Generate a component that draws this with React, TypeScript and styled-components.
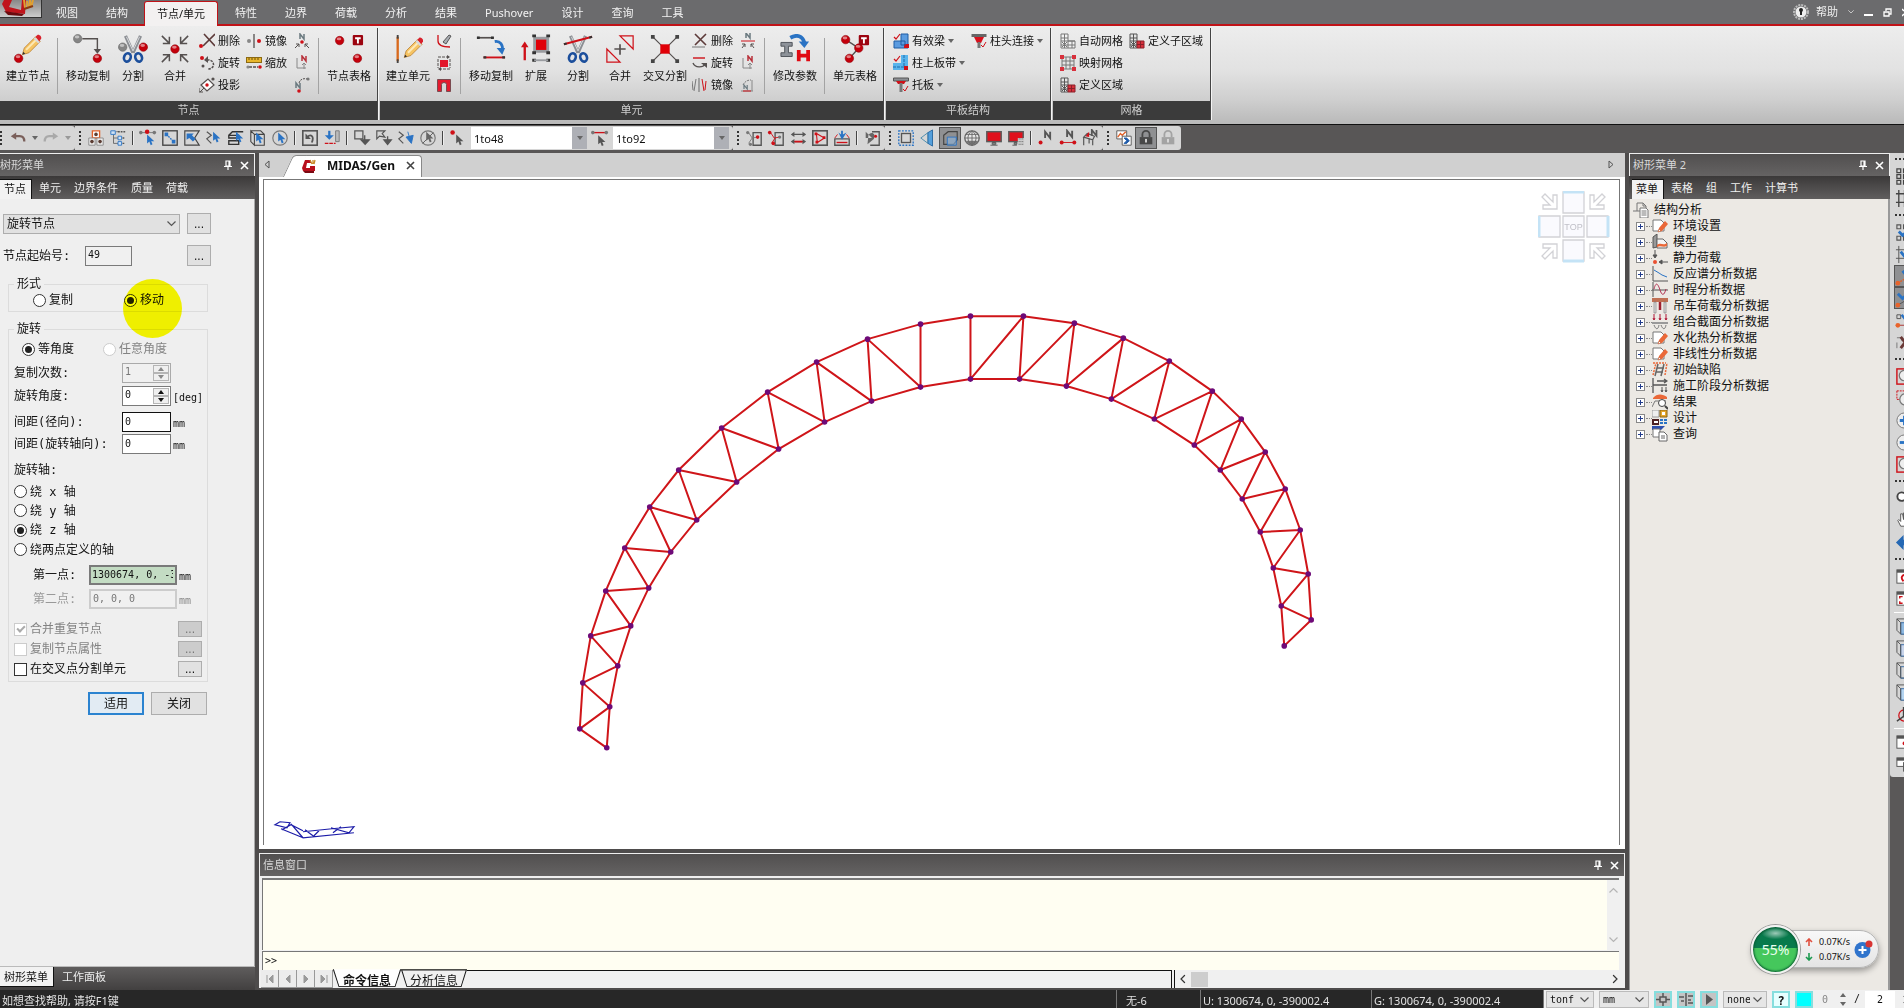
import React from "react";
import styled, { createGlobalStyle, css } from "styled-components";

const UI = `"Noto Sans", "Noto Sans CJK SC", sans-serif`;
const FORM = `"DejaVu Sans Mono", "Noto Sans CJK SC", monospace`;
const RED = "#cf1018";
const BLUE = "#2a73c4";
const INK = "#55504f";

const Global = createGlobalStyle`
  *, *::before, *::after { box-sizing: border-box; }
  body { margin: 0; overflow: hidden; font-family: ${UI}; font-size: 11px; color: #111; background: #5a5959; }
  button, input, select, textarea { font: inherit; color: inherit; margin: 0; padding: 0; border: 0; border-radius: 0; background: none; outline: 0; }
  button { cursor: default; white-space: nowrap; }
  svg { display: block; flex: none; }
`;

/* ---------- drawing helpers ---------- */

type BallProps = { x: number; y: number; r?: number; gray?: boolean };
const Ball = ({ x, y, r = 4, gray }: BallProps) => (
  <g>
    <circle cx={x} cy={y} r={r} fill={gray ? "#858585" : "#c4000c"} stroke={gray ? "#666" : "#8e0008"} strokeWidth="0.6" />
    <ellipse cx={x - r * 0.15} cy={y - r * 0.4} rx={r * 0.55} ry={r * 0.35} fill="#fff" opacity="0.5" />
  </g>
);

const Pencil = () => (
  <g>
    <path d="M10 22l2-7L24 3l5 5-12 12z" fill="#f6c463" stroke="#b5792a" strokeWidth="0.8" />
    <path d="M14 17L26 5" stroke="#fde9b8" strokeWidth="2" />
    <path d="M24 3l2-2c2-1 5 2 4 4l-2 3z" fill="#d8202c" />
    <path d="M22 5l5 5 1.500-1.500-5-5z" fill="#d5d8de" />
    <path d="M10 22l1-3 2 2z" fill="#333" />
  </g>
);

const Scissors = () => (
  <g>
    <path d="M8 2l8 18M24 2l-8 18" stroke="#8c8f94" strokeWidth="3.500" fill="none" />
    <path d="M9 3l7 15M23 3l-7 15" stroke="#dcdee0" strokeWidth="1" fill="none" />
    <ellipse cx="10" cy="25" rx="3.500" ry="4.500" fill="none" stroke="#1c4f9c" strokeWidth="2.800" transform="rotate(20 10 25)" />
    <ellipse cx="22" cy="25" rx="3.500" ry="4.500" fill="none" stroke="#1c4f9c" strokeWidth="2.800" transform="rotate(-20 22 25)" />
  </g>
);

const TBadge = ({ x, y }: { x: number; y: number }) => (
  <g>
    <rect x={x} y={y} width="11" height="11" rx="1" fill="#9c0410" />
    <path d={`M${x + 2.5} ${y + 3.500}h6M${x + 5.5} ${y + 3}v6`} stroke="#fff" strokeWidth="2" />
  </g>
);

const Cursor = ({ x, y, c = BLUE }: { x: number; y: number; c?: string }) => (
  <path transform={`translate(${x} ${y})`} d="M0 0v10l2.500-2 1.500 4 2-1-1.500-3.500H8z" fill={c} />
);

const N = ({ x, y, c = "#6b7a80", s = 1 }: { x: number; y: number; c?: string; s?: number }) => (
  <path transform={`translate(${x} ${y}) scale(${s})`} d="M0 5V0l4 5V0" fill="none" stroke={c} strokeWidth="1.500" />
);

const bigIcons: Record<string, React.ReactNode> = {
  node: <><Pencil /><Ball x={6} y={26} r={4.5} /></>,
  move: <><Ball x={5} y={5} r={4.5} gray /><path d="M10 5h16v13" fill="none" stroke={INK} strokeWidth="1.500" /><path d="M22 16h8l-4 5z" fill={INK} /><Ball x={26} y={26} r={4.5} /></>,
  cut: <><Scissors /><Ball x={5} y={14} r={4.500} gray /><Ball x={27} y={14} r={4.500} /></>,
  merge: <><g fill="none" stroke={INK} strokeWidth="1.600"><path d="M2 2l8 8M3 10h7V3M30 2l-8 8M29 10h-7V3M2 30l8-8M3 22h7v7M30 30l-8-8M29 22h-7v7" /></g><Ball x={16} y={16} r={4.500} /></>,
  nodeTable: <><Ball x={6} y={7} r={4.500} /><TBadge x={20} y={1} /><Ball x={25} y={26} r={4.500} /></>,
  elem: <><path d="M5 3v26" stroke="#d8691c" strokeWidth="2.500" /><path d="M5 1v4M5 27v4" stroke="#444" strokeWidth="2" /><g transform="translate(2 3)"><Pencil /></g></>,
  moveElem: <><path d="M1 4h18" stroke={INK} strokeWidth="1.800" /><path d="M20 8c6-1 9 4 8 9" fill="none" stroke={BLUE} strokeWidth="3" /><path d="M22 15h9l-3 7z" fill={BLUE} /><path d="M8 25h23" stroke={RED} strokeWidth="2" /><path d="M8 25h3M28 25h3M1 4h3M16 4h3" stroke="#333" strokeWidth="2.500" /></>,
  extend: <><path d="M4 28V12" stroke={RED} strokeWidth="2.500" /><path d="M0 14l4-6 4 6z" fill={RED} /><rect x="13" y="3" width="17" height="17" fill="#9a9ca0" /><rect x="16" y="6" width="11" height="11" fill="#e00008" /><path d="M12 2h4M27 2h4M12 20h4M27 20h4M12 28h4M27 28h4" stroke="#333" strokeWidth="3" /><path d="M14 28h15" stroke="#9a9ca0" strokeWidth="2" /></>,
  cutElem: <><Scissors /><path d="M1 11L31 3" stroke={RED} strokeWidth="2.200" /><path d="M1 11l3-1M28 4l3-1" stroke="#333" strokeWidth="2.200" /></>,
  mergeElem: <><path d="M16 2h14v14zM2 16v14h14z" fill="none" stroke={RED} strokeWidth="1.300" /><path d="M16 11v11M10 16h12" stroke={INK} strokeWidth="1.800" /></>,
  cross: <><path d="M3 3l26 26M29 3L3 29" stroke={INK} strokeWidth="1.300" /><path d="M1 1h4v4H1zM27 1h4v4h-4zM1 27h4v4H1zM27 27h4v4h-4z" fill="#444" /><rect x="11" y="11" width="10" height="10" fill="#e00008" /></>,
  param: <><path d="M1 9h12v4H9v7h4v4H1v-4h4v-7H1z" fill="#8d9299" stroke="#4d5157" /><path d="M18 17h4v4h6v-4h4v12h-4v-4h-6v4h-4z" fill="#e00a12" /><path d="M11 4c7-4 13-2 15 5" fill="none" stroke={BLUE} strokeWidth="4" /><path d="M20 8h11l-5 7z" fill={BLUE} /></>,
  elemTable: <><path d="M6 6l14 9-10 11" fill="none" stroke={INK} strokeWidth="1.500" /><Ball x={6} y={6} r={4.500} /><Ball x={20} y={15} r={4.500} /><Ball x={10} y={26} r={4.500} /><TBadge x={20} y={1} /></>,
};

const smallIcons: Record<string, React.ReactNode> = {
  del: <><path d="M5 1l11 12M16 1L4 13" stroke="#5d3b3a" strokeWidth="1.600" /><circle cx="2" cy="13" r="2" fill={RED} /></>,
  delE: <><path d="M3 1l11 11M14 1L3 12" stroke="#5d3b3a" strokeWidth="1.600" /><path d="M0 14h13" stroke="#888" strokeWidth="1.200" /></>,
  rot: <><circle cx="3" cy="3" r="2" fill={RED} /><circle cx="4" cy="11" r="1.500" fill={INK} /><path d="M8 5c8-1 9 9 1 9M6 3" fill="none" stroke={INK} strokeWidth="1.500" strokeDasharray="2.500 1" /><path d="M9 1v7l-4-3z" fill={INK} /></>,
  rotE: <><path d="M1 3h12" stroke={RED} strokeWidth="1.400" /><path d="M1 8c2 5 10 5 12 1" fill="none" stroke={INK} strokeWidth="1.400" /><path d="M9 8h6v5z" fill={INK} /></>,
  proj: <><path d="M2 8l7-6 6 6-7 6z" fill="#fff" stroke={INK} strokeWidth="1.200" /><circle cx="8" cy="8" r="1.700" fill={RED} /><circle cx="14" cy="2" r="1.600" fill={INK} /><path d="M5 11l-4 4M0 11v4h4" fill="none" stroke={INK} /></>,
  mirror: <><path d="M8 1v14" stroke={INK} strokeWidth="1.300" /><circle cx="3" cy="8" r="2" fill="#888" /><circle cx="13" cy="8" r="2" fill={RED} /></>,
  mirrorE: <><path d="M4 2L2 14M0 4l1 9" stroke="#777" fill="none" /><path d="M7 1v14" stroke="#888" strokeWidth="1.400" /><path d="M10 2l2 12M14 4l-1 9" stroke={RED} fill="none" /></>,
  scale: <><rect x="0.500" y="2.500" width="15" height="5" fill="#e8b62c" stroke="#8b6a14" /><path d="M3 3v2M6 3v2M9 3v2M12 3v2" stroke="#6b4f0c" /><path d="M3 12h9" stroke={INK} strokeWidth="1.300" strokeDasharray="3 1" /><circle cx="2" cy="12" r="1.600" fill="#888" /><circle cx="14" cy="12" r="1.800" fill={RED} /></>,
  nMerge: <><N x={6} y={1} /><circle cx="8" cy="9" r="1.800" fill={RED} /><path d="M1 15l4-4M2 11h3v3M15 15l-4-4M14 11h-3v3" fill="none" stroke={INK} /></>,
  nMergeE: <><N x={6} y={0} /><path d="M1 8h14" stroke={RED} /><path d="M2 15l3-4M2 11h3v3M14 15l-3-4M14 11h-3v3" fill="none" stroke={INK} /></>,
  nAxis: <><path d="M3 3v10h9" fill="none" stroke="#888" /><path d="M10 14V8M8 10l2-2 2 2" fill="none" stroke="#888" /><N x={8} y={1} c="#b8303a" /></>,
  nRot: <><path d="M5 6c1-4 5-5 8-4" fill="none" stroke={INK} strokeDasharray="2 1" /><circle cx="14" cy="2" r="1.600" fill="#777" /><N x={2} y={6} /><circle cx="5" cy="14" r="1.800" fill={RED} /></>,
  nRotE: <><path d="M12 3v11M1 14h12" stroke="#888" fill="none" /><path d="M3 8c2-4 5-5 8-5" fill="none" stroke="#777" strokeDasharray="2 1" /><N x={4} y={8} s={0.8} /><path d="M3 14h8" stroke={RED} /></>,
  curve: <><path d="M2 2v6c0 4 3 6 12 6" fill="none" stroke={RED} strokeWidth="1.300" /><path d="M7 9l6-7 2 1-5 8z" fill="#a9adb3" stroke="#555" /></>,
  swap: <><rect x="4" y="5" width="8" height="7" fill="#e2182b" /><path d="M2 2h11M14 14H4M2 4v9M14 4v9" fill="none" stroke={INK} strokeDasharray="3 1" /><path d="M11 0l3 2-3 2zM5 12l-3 2 3 2z" fill={INK} /></>,
  arch: <path d="M1.500 14.500v-12h13v12h-4v-7a2.500 2 0 0 0-5 0v7z" fill="#e51a2e" stroke="#7b4a50" />,
  beam: <><path d="M8 1h7v14H1V8h7z" fill="#5a9be0" stroke="#1f5da3" /><path d="M11 11h5v4h-5z" fill={RED} /><path d="M8 8h4v4H8z" fill="none" stroke="#1f5da3" /><path d="M1 4l2 2 4-5" fill="none" stroke={RED} strokeWidth="1.200" /></>,
  strip: <><path d="M8 0h7v15H0V8h8z" fill="#58b4ec" /><path d="M11 0v12M0 12h12" fill="none" stroke="#1d6cae" strokeDasharray="3 1" /><path d="M11 11h4v4h-4z" fill={RED} /><path d="M1 4l2 2 4-5" fill="none" stroke={RED} strokeWidth="1.200" /></>,
  plate: <><path d="M0.500 1h15v3h-15z" fill="#8c8f94" stroke="#555" /><path d="M3 4h10l-2 3H5z" fill={RED} /><path d="M6.500 6h3v9h-3z" fill="#777" /><path d="M10 12l2 2 3-5" fill="none" stroke={RED} /></>,
  head: <><path d="M0.500 1h15v3h-15z" fill="#666" /><path d="M3 4h10l-3 6H6z" fill="#d8101c" /><path d="M6.500 9h3v6h-3z" fill="#777" /><path d="M10 12l2 2 3-5" fill="none" stroke={RED} /></>,
  mesh: <path d="M1 1h7v7h7v7H1zM1 5h7M1 8h14M1 12h14M4.500 1v14M8 8v7M12 8v7M2 9l5 5M7 9l-5 5" fill="#f2f2f2" stroke="#777" />,
  mapMesh: <><path d="M2 2h12v12H2zM6 2v12M10 2v12M2 6h12M2 10h12" fill="none" stroke="#777" /><path d="M0 0h4v4H0zM12 0h4v4h-4zM0 12h4v4H0zM12 12h4v4h-4z" fill="#d8303c" /></>,
  region: <><path d="M1 1h7v14H1zM1 5h7M1 8h7M1 12h7M4.500 1v14M2 9l5 5M7 9l-5 5" fill="#e4e4e4" stroke="#555" /><path d="M8 8h7v7H8z" fill="#d8303c" stroke="#8b2029" /><path d="M11.500 8v7M8 11.500h7" stroke="#8b2029" /></>,
};

const Lock = ({ c }: { c: string }) => (
  <><path d="M6 9V6a4 4 0 0 1 8 0v3" fill="none" stroke={c} strokeWidth="2" /><rect x="3" y="9" width="14" height="8" fill={c} /><rect x="9" y="11" width="2" height="4" fill="#ddd" /></>
);
const Cube = ({ fill = "none" }: { fill?: string }) => (
  <g fill="none" stroke="#555"><path d="M2 2h12l4 4v12H6l-4-4z" /><path d="M6 6h12v12H6z" fill={fill} stroke="#3a6ea8" /><path d="M2 2l4 4M6 6v12" /></g>
);

const barIcons: Record<string, React.ReactNode> = {
  undo: <><path d="M6 8h6c4 0 5 2 5 6" fill="none" stroke="#7a5f5a" strokeWidth="2.500" /><path d="M8 4v8L2 8z" fill="#7a5f5a" /></>,
  redo: <><path d="M14 8H8c-4 0-5 2-5 6" fill="none" stroke="#a9a9a9" strokeWidth="2.500" /><path d="M12 4v8l6-4z" fill="#a9a9a9" /></>,
  group: <><path d="M6 2h8v8H6z" fill="#fff" stroke="#e0622a" strokeWidth="1.500" /><path d="M2 10h7v8H2zM11 10h7v8h-7z" fill="#eee" stroke="#888" /><circle cx="10" cy="6" r="2" fill="#5b3d33" /><circle cx="5.500" cy="14" r="2" fill="#5b3d33" /><circle cx="14.500" cy="14" r="2" fill="#5b3d33" /></>,
  tree: <><path d="M5 6v10M5 10h5M5 16h5M8 3h2" stroke="#666" fill="none" /><path d="M2 2h5v4H2zM10 8h4v4h-4zM10 14h4v4h-4z" fill="#cfe2f5" stroke={BLUE} /><path d="M10 3h8M15 10h3M15 16h3" stroke="#555" strokeWidth="1.500" strokeDasharray="2 1" /></>,
  selNode: <><path d="M1 4h18" stroke="#777" /><circle cx="2" cy="4" r="2" fill="#777" /><circle cx="17" cy="4" r="2" fill="#777" /><circle cx="9" cy="3" r="2.500" fill={RED} /><Cursor x={9} y={6} /></>,
  win: <><rect x="2" y="2" width="16" height="16" fill="none" stroke="#444" strokeWidth="1.500" /><path d="M4 4h4v4H4zM12 12h4v4h-4z" fill={BLUE} /><path d="M6 6l8 8" stroke={BLUE} strokeWidth="1.500" strokeDasharray="2 1" /></>,
  poly: <><path d="M18 2H2v16h16l-5-8z" fill="none" stroke="#444" strokeWidth="1.300" /><path d="M4 5h8l-2 2 4 4-3 3-4-4-3 2z" fill={BLUE} /></>,
  line: <><path d="M2 3l5 4-5 4 5 5" fill="none" stroke="#555" strokeWidth="1.300" /><Cursor x={9} y={3} /></>,
  plane: <><path d="M2 7l4-4h12M2 7h11v3H2zM2 13h11v4H2z" fill="none" stroke="#333" strokeWidth="1.500" /><Cursor x={10} y={3} /></>,
  vol: <><path d="M2 2l4 4v12l-4-4zM6 6h11v12H6zM2 2h11l4 4" fill="none" stroke="#444" strokeWidth="1.200" /><Cursor x={8} y={4} /></>,
  circ: <><circle cx="10" cy="10" r="8" fill="none" stroke="#777" strokeWidth="1.300" /><Cursor x={8} y={4} /></>,
  prev: <><rect x="2" y="2" width="16" height="16" fill="none" stroke="#555" strokeWidth="1.800" /><path d="M7 9c4-4 8-1 5 6" fill="none" stroke="#555" strokeWidth="2" /><path d="M5 5v6h6z" fill="#555" /></>,
  recent: <><path d="M7 2v8" stroke={BLUE} strokeWidth="2.500" /><path d="M2 7h10l-5 5z" fill={BLUE} /><path d="M14 2h4v12h-4z" fill="#bbb" stroke="#777" /><path d="M2 16h12" stroke={RED} strokeDasharray="4 1" strokeWidth="1.500" /></>,
  unwin: <><path d="M2 2h9v9H2z" fill="none" stroke="#555" strokeWidth="1.400" /><path d="M13 7v6M9 12h9l-4.500 5z" fill="#555" stroke="#555" strokeWidth="1.500" /></>,
  unpoly: <><path d="M11 2H2v9l3-3 6 1-3-4z" fill="none" stroke="#555" strokeWidth="1.300" /><path d="M14 8v6M10 12h8l-4 5z" fill="#555" stroke="#555" strokeWidth="1.500" /></>,
  unline: <><path d="M2 3l5 4-5 4 5 5" fill="none" stroke="#555" strokeWidth="1.300" /><path d="M12 3l2 7M10 9l6 7 2-9z" fill={BLUE} stroke={BLUE} /></>,
  uncirc: <><circle cx="10" cy="10" r="8" fill="none" stroke="#777" strokeWidth="1.300" /><path d="M4 16L16 4" stroke="#555" /><Cursor x={8} y={3} c="#666" /></>,
  pickN: <><circle cx="4" cy="4" r="2.500" fill={RED} /><Cursor x={8} y={6} c="#555" /></>,
  pickE: <><path d="M1 4h16" stroke={RED} strokeWidth="1.500" /><circle cx="2" cy="4" r="2" fill="#777" /><circle cx="17" cy="4" r="2" fill="#777" /><Cursor x={8} y={7} c="#555" /></>,
  act1: <><path d="M9 4h9v14H9z" fill="none" stroke="#555" strokeWidth="1.500" /><path d="M4 4l4 6 6-1M4 16l4-6" fill="none" stroke="#777" /><circle cx="14" cy="9" r="2" fill={RED} /><circle cx="3" cy="4" r="1.800" fill="#777" /><circle cx="6" cy="17" r="1.800" fill="#777" /></>,
  act2: <><path d="M9 4h9v14H9z" fill="none" stroke="#555" strokeWidth="1.500" /><path d="M4 4l4 6 6-1M5 16l4-6" fill="none" stroke={RED} /><circle cx="14" cy="9" r="1.800" fill="#777" /><circle cx="3" cy="4" r="2" fill={RED} /><circle cx="7" cy="16" r="2" fill={RED} /></>,
  act3: <><path d="M4 6h14M3 14h14" stroke="#555" strokeWidth="1.500" /><path d="M6 3v6L2 6zM6 11v6l-4-3zM15 3l4 3-4 3zM15 11l4 3-4 3z" fill="#555" /><path d="M6 14h9" stroke={RED} strokeWidth="2" /></>,
  act4: <><rect x="2" y="2" width="16" height="16" fill="none" stroke="#555" strokeWidth="1.800" /><path d="M6 5l9 5-8 5z" fill="none" stroke={RED} strokeWidth="1.200" /><path d="M4 4h3v3H4zM13 8h3v3h-3zM5 13h3v3H5z" fill={RED} /></>,
  act5: <><path d="M2 11h16v7H2z" fill="none" stroke="#555" strokeWidth="1.500" /><path d="M4 15h12" stroke={RED} strokeWidth="1.500" /><path d="M2 10l3-4M18 10l-3-4" stroke={RED} /><path d="M6 4l4 8 5-8-4 2V2H9v4z" fill={BLUE} /></>,
  act6: <><path d="M10 3h8v15H8" fill="none" stroke="#555" strokeWidth="1.500" /><path d="M3 3v7h7zM6 7c3-5 9-2 6 4l-7 6" fill="#666" /><circle cx="14" cy="8" r="1.700" fill={RED} /></>,
  fit: <><rect x="5" y="5" width="10" height="10" fill="none" stroke="#555" strokeWidth="1.500" /><rect x="2" y="2" width="16" height="16" fill="none" stroke={BLUE} strokeWidth="1.500" strokeDasharray="2 1.500" /></>,
  persp: <><path d="M2 10l8-6v12z" fill="none" stroke="#48a" /><path d="M10 4l5-3v18l-5-3z" fill="#55a0dc" stroke="#26679f" /></>,
  cube: <><path d="M3 7l5-4h10v9l-4 5H3z" fill="none" stroke="#444" strokeWidth="1.300" /><path d="M7 9h10v9H7z" fill="#8fb6dc" fillOpacity=".6" stroke={BLUE} /></>,
  globe: <><circle cx="10" cy="10" r="8" fill="#e6e6e6" stroke="#666" strokeWidth="1.500" /><path d="M3 13h14c-2 6-12 6-14 0z" fill="#777" /><path d="M2 10h16M3 6h14M10 2v16M10 2c-6 4-6 12 0 16M10 2c6 4 6 12 0 16" fill="none" stroke="#666" /></>,
  screen: <><rect x="2" y="3" width="16" height="11" fill="#e0101c" stroke="#5a5a5a" strokeWidth="1.600" /><path d="M8 15h4v2H8zM6 18h8" stroke="#555" fill="#888" /></>,
  screen2: <><rect x="2" y="3" width="16" height="11" fill="#e0101c" stroke="#5a5a5a" strokeWidth="1.600" /><path d="M8 15h3v2H8zM6 18h5" stroke="#555" fill="#888" /><path d="M12 10h7v8h-7z" fill="#ccc" /><path d="M13 11h5M13 14h5M13 17h5" stroke="#555" strokeDasharray="1 1" /></>,
  nN: <><N x={9} y={3} c="#555" s={1.4} /><circle cx="4" cy="15" r="2.200" fill={RED} /></>,
  nE: <><N x={9} y={2} c="#555" s={1.4} /><path d="M3 15h14" stroke={RED} /><circle cx="3" cy="15" r="2.200" fill={RED} /><circle cx="17" cy="15" r="2.200" fill={RED} /></>,
  nP: <><N x={12} y={1} c="#555" s={1.3} /><path d="M3 9l4-4 8 3-2 4zM3 9v9M13 12v6M9 10v6" fill="none" stroke="#555" strokeWidth="1.300" /><path d="M5 8l4-5v6z" fill={RED} /></>,
  chart: <><path d="M2 2h11v9H2z" fill="#fff" stroke="#555" /><path d="M3 9l3-4 2 2 4-4" fill="none" stroke="#e0622a" strokeWidth="1.500" /><path d="M8 8h10v10H8z" fill="#fff" stroke="#555" /><path d="M10 10l3 3-3 3h3l3-3-3-3z" fill="#1d5aa8" stroke="#1d5aa8" /></>,
  lockD: <Lock c="#484848" />,
  lockG: <Lock c="#a3a3a3" />,
  squares: <path d="M2 2h4v4H2zM9 2h4v4H9zM2 8h4v4H2zM9 8h4v4H9zM2 14h4v4H2zM9 14h4v4H9z" fill="none" stroke="#444" strokeWidth="1.300" />,
  gridL: <path d="M4 1v18M10 1v18M1 5h18M1 14h18" fill="none" stroke="#444" strokeWidth="1.400" />,
  sqChk: <><path d="M2 2h4v4H2zM9 2h4v4H9zM2 14h4v4H2zM9 14h4v4H9z" fill="none" stroke="#555" strokeWidth="1.200" /><path d="M4 9l4 4 8-7" fill="none" stroke={BLUE} strokeWidth="3" /></>,
  gridChk: <><path d="M4 1v18M10 1v18M1 5h18M1 14h18" fill="none" stroke="#555" /><path d="M6 7l4 5 8-7" fill="none" stroke={BLUE} strokeWidth="3" /></>,
  snapL: <><path d="M3 17L18 8" stroke="#e0622a" strokeDasharray="2 1" strokeWidth="1.500" /><circle cx="3" cy="17" r="2.500" fill="#e8642c" /><path d="M8 4l4 5 8-7" fill="none" stroke={BLUE} strokeWidth="3" /></>,
  snapM: <><path d="M3 17L18 8" stroke="#555" /><circle cx="3" cy="17" r="2.500" fill="#e8642c" /><path d="M3 5l5 5 9-8" fill="none" stroke={BLUE} strokeWidth="3" /></>,
  snapP: <><path d="M2 4h4v4H2z" fill="none" stroke="#555" /><path d="M7 4l4 5 7-6" fill="none" stroke={BLUE} strokeWidth="2.500" /><path d="M3 15h16" stroke="#a33" /><circle cx="3" cy="15" r="2.500" fill="#e8642c" /></>,
  snapX: <><path d="M2 5h5v3M2 10v6" fill="none" stroke="#777" /><path d="M6 4l9 12M15 4L6 16" stroke="#6b3a38" strokeWidth="3" /></>,
  zoomW: <><rect x="2" y="2" width="16" height="16" fill="none" stroke={RED} strokeWidth="1.500" /><circle cx="10" cy="9" r="5.500" fill="#eee" stroke="#777" strokeWidth="1.300" /></>,
  zoomD: <><rect x="2" y="2" width="16" height="9" fill="none" stroke={RED} strokeDasharray="2 1" /><circle cx="11" cy="11" r="6" fill="#eee" stroke="#777" strokeWidth="1.300" /></>,
  zoomI: <><circle cx="10" cy="10" r="8" fill="#eee" stroke="#777" /><path d="M5 10h10M10 5v10" stroke={BLUE} strokeWidth="3" /></>,
  zoomO: <><circle cx="10" cy="10" r="8" fill="#eee" stroke="#777" /><path d="M5 10h10" stroke={BLUE} strokeWidth="3" /></>,
  mag: <><circle cx="7" cy="8" r="4.500" fill="#fff" stroke="#444" strokeWidth="2" /><path d="M10 11l6 6" stroke="#444" strokeWidth="2.500" /></>,
  hand: <path d="M3 10l3 6h8l2-10-2-1-1 4V3h-2v6-7H9v7L8 3H6v8L4 9z" fill="#fff" stroke="#555" />,
  rotate: <path d="M1 10l8-8v5h4V2l7 8-7 8v-5H9v5z" fill="#2568b4" />,
  winR: <><rect x="2" y="3" width="16" height="14" fill="#fff" stroke="#555" /><path d="M2 3h16v3H2z" fill="#555" /><path d="M13 9c-5-2-8 2-4 6" fill="none" stroke={RED} strokeWidth="2" /></>,
  winS: <><rect x="2" y="3" width="16" height="14" fill="#fff" stroke="#555" /><path d="M2 3h16v3H2z" fill="#555" /><path d="M5 10V8h3M5 13v2h3" fill="none" stroke={RED} strokeWidth="1.500" /></>,
  cubeA: <Cube fill="#8db8e0" />,
  cubeB: <Cube fill="#c8d4ea" />,
  cubeC: <Cube />,
  cubeD: <Cube fill="#b4d4f0" />,
  axes: <><circle cx="10" cy="11" r="6" fill="none" stroke={RED} strokeWidth="1.300" /><path d="M9 2v10l-7 5M9 12l8 4" fill="none" stroke="#444" strokeWidth="1.500" /></>,
  winP: <><rect x="2" y="3" width="16" height="13" fill="#fff" stroke="#555" /><path d="M2 3h16v3H2z" fill="#555" /><circle cx="10" cy="11" r="2" fill={RED} /></>,
  winC: <><rect x="2" y="3" width="14" height="9" fill="#fff" stroke="#555" /><path d="M2 3h14v3H2z" fill="#555" /><rect x="9" y="8" width="9" height="9" fill="#fff" stroke="#555" /></>,
};

const treeIcons: Record<string, React.ReactNode> = {
  root: <><path d="M4 9V1h6l3 3M0 9h7M10 1v3h3v3" fill="none" stroke="#777" /><path d="M7 6h6l2 2v8H7zM8.500 9h5M8.500 11h5M8.500 13h5" fill="#fff" stroke="#777" /></>,
  edit: <><path d="M1 2h8l3 3v8H1z" fill="#fff" stroke="#777" /><path d="M6 14l1-4 6-7 3 3-6 7z" fill="#ea6838" /><path d="M6 14l1-3 2 2z" fill="#fff" stroke="#b5461c" strokeWidth="0.500" /></>,
  model: <><path d="M1 14V3l4-3v13z" fill="#999" stroke="#555" /><path d="M5 14V5h6l4 4v5z" fill="#f4f4f4" stroke="#666" /><path d="M5 11c4-3 6 1 10-2v3c-4 2-6-1-10 1z" fill="#ea6838" /></>,
  load: <><path d="M3 0v7M1 5l2 3 2-3zM8 12h8M10 10l-3 2 3 2z" fill="#555" stroke="#555" /><circle cx="3" cy="12" r="2" fill="#ea5030" /></>,
  spec: <><path d="M1 0v15h15" fill="none" stroke="#555" /><path d="M2 4l5 3 3 2 5 2" fill="none" stroke={BLUE} /></>,
  time: <><path d="M1 0v15M0 8h16" fill="none" stroke="#555" /><path d="M2 7c2-8 4-5 6 1s4 6 6-1" fill="none" stroke="#b03050" /></>,
  crane: <><path d="M0 0h16v4H0z" fill="#c07054" /><path d="M2 4h2v11H2zM12 4h2v11h-2z" fill="#ddd" stroke="#777" strokeWidth="0.600" /><path d="M8 4v8" stroke="#a02030" strokeWidth="2.500" /></>,
  comp: <><path d="M2 0v6M8 0v6M14 0v6M1 4l1 2 1-2M7 4l1 2 1-2M13 4l1 2 1-2" stroke="#b01838" fill="none" /><path d="M0 8h16v2H0z" fill="#999" /><path d="M2 11c2 5 4 5 5 0M9 11c2 5 4 5 5 0" fill="none" stroke="#777" /></>,
  flaw: <><path d="M1 1h13M1 13L4 1M13 13L15 1" stroke="#ea6838" strokeDasharray="2 1" strokeWidth="1.500" /><path d="M3 14L6 2M9 14l3-12M5 6h7M4 10h7" stroke="#666" strokeWidth="1.500" fill="none" /></>,
  stage: <><path d="M1 0v15M1 7h14M12 1l3 2-3 2M5 3h9" fill="none" stroke="#555" strokeWidth="1.300" /><path d="M10 9v5M14 9v5M9 12l1 2 1-2M13 12l1 2 1-2" stroke="#555" fill="none" /></>,
  result: <><path d="M1 4c4-5 10-4 14-1v2H1z" fill="#ea6838" /><path d="M0 13l3-6h11" stroke="#777" fill="none" /><circle cx="10" cy="9" r="3.500" fill="#fff" stroke="#444" /><path d="M13 12l3 3" stroke="#444" strokeWidth="2" /></>,
  design: <><path d="M0 0h7v7H0z" fill="#eee" stroke="#999" /><path d="M8 0h7v7H8z" fill="#e6a82c" stroke="#8a6212" /><path d="M10 2h3v3h-3z" fill="#fff" /><path d="M0 9h7v6H0z" fill="#4c2022" /><path d="M2 11h4v2H2z" fill="#fff" /><path d="M8 10h8M8 13h8" stroke={BLUE} strokeWidth="2" strokeDasharray="3 1" /></>,
  query: <><path d="M0 0h13L9 4H0z" fill="#2c4fae" /><path d="M1 3h7v8H1z" fill="#fff" stroke="#777" /><path d="M7 6h5l3 3v6H7zM9 10h4M9 12h4" fill="#fff" stroke="#666" /></>,
};

const Glyph = ({ set, name, size, box }: { set: Record<string, React.ReactNode>; name: string; size: number; box: number }) => (
  <svg width={size} height={size} viewBox={`0 0 ${box} ${box}`} aria-hidden="true">{set[name]}</svg>
);

const Caret = ({ c = "#666" }: { c?: string }) => (
  <svg width="6" height="4" viewBox="0 0 6 4" aria-hidden="true"><path d="M0 0h6L3 4z" fill={c} /></svg>
);
const Chevron = ({ c = "#555", w = 9 }: { c?: string; w?: number }) => (
  <svg width={w} height="6" viewBox="0 0 9 6" aria-hidden="true"><path d="M0.500 0.500l4 4 4-4" fill="none" stroke={c} strokeWidth="1.200" /></svg>
);
const Pin = () => (
  <svg width="8" height="10" viewBox="0 0 8 10" aria-hidden="true"><path d="M2 1h4v5H2zM5 1v5M0 6.500h8M4 7v3" fill="none" stroke="#fff" strokeWidth="1.200" /></svg>
);
const Cross = ({ c = "#fff" }: { c?: string }) => (
  <svg width="9" height="9" viewBox="0 0 9 9" aria-hidden="true"><path d="M1 1l7 7M8 1L1 8" stroke={c} strokeWidth="1.600" /></svg>
);

/* ---------- shell ---------- */

const Shell = styled.div`
  display: flex; flex-direction: column; height: 100vh; overflow: hidden;
`;

const TitleBar = styled.header`
  display: flex; height: 26px; background: #6b6b6d; border-bottom: 2px solid #c01217; flex: none;
`;
const Logo = styled.div`
  width: 42px; height: 18px; flex: none; overflow: hidden; background: linear-gradient(#888, #ccc);
  border: solid #333; border-width: 0 1px 1px 0;
`;
const RibbonTab = styled.button<{ $on?: boolean }>`
  height: 24px; padding: 2px 14px 0; line-height: 20px; color: #f2f2f2;
  ${(p) => p.$on && css`
    height: 25px; margin: 1px 3px 0 2px; padding: 0 12px; color: #111; background: #f3f1f1;
    border: solid #c01217; border-width: 1px 1px 0; border-radius: 3px 3px 0 0; position: relative;
  `}
`;
const WindowTools = styled.div`
  display: flex; align-items: center; gap: 10px; margin-left: auto; color: #eee; overflow: hidden;
  button { display: flex; align-items: center; gap: 7px; line-height: 20px; }
`;

const Ribbon = styled.section`
  display: flex; gap: 2px; height: 98px; padding-top: 2px; flex: none;
  background: linear-gradient(#ededed, #e2e2e2 45%, #cfcfcf 75%, #b9b9b9);
`;
const RibbonGroup = styled.section`
  display: flex; flex-direction: column; height: 92px; border-right: 1px solid #444; box-shadow: 1px 0 #f4f4f4;
`;
const GroupBody = styled.div`
  display: flex; flex: 1; padding: 2px 4px 0;
`;
const GroupName = styled.h2`
  margin: 0; height: 19px; font-size: 11px; font-weight: 400; line-height: 17px; text-align: center; color: #cfcfcf; background: #3b3b3b;
`;
const BigButton = styled.button<{ $wide?: boolean }>`
  display: flex; flex-direction: column; align-items: center; gap: 4px; width: ${(p) => (p.$wide ? 48 : 42)}px;
  padding-top: 4px; line-height: 16px;
`;
const SmallColumn = styled.div`
  display: flex; flex-direction: column; margin-left: 1px;
`;
const SmallButton = styled.button`
  display: flex; align-items: center; gap: 3px; height: 22px; padding: 0 3px; line-height: 20px;
  &:has(span) { padding-left: 2px; }
`;
const RibbonRule = styled.hr`
  width: 1px; height: 56px; margin: 8px 6px 0 5px; border: 0; background: #a3a3a3; flex: none;
`;

const ToolStrip = styled.div`
  display: flex; height: 29px; padding: 1px 0 3px; border-top: 1px solid #111; background: #585656; flex: none;
`;
const ToolPanel = styled.div`
  display: flex; align-items: center; padding-right: 2px; background: #d6d6d6; border-radius: 0 3px 3px 0;
`;
const Grip = styled.span<{ $first?: boolean }>`
  width: ${(p) => (p.$first ? 7 : 10)}px; height: 14px; flex: none;
  background: repeating-linear-gradient(#333 0 2px, transparent 2px 4px) ${(p) => (p.$first ? 0 : 4)}px 0 / 2px 100% no-repeat;
`;
const ToolButton = styled.button<{ $down?: boolean }>`
  display: grid; place-items: center; width: 22px; height: 22px; flex: none;
  ${(p) => p.$down && css`background: #8f9092; border: 1px solid #555;`}
`;
const CaretButton = styled.button`
  display: grid; place-items: center; width: 11px; height: 22px;
`;
const ToolRule = styled.span`
  width: 2px; height: 14px; margin: 0 3px; background: linear-gradient(90deg, #444 50%, #eee 50%);
`;
const Combo = styled.div`
  display: flex; width: 116px; height: 22px; margin: 0 2px; background: #fff; font-size: 11px;
  input { flex: 1; min-width: 0; padding-left: 3px; }
  button { display: grid; place-items: center; width: 15px; background: #aeb0b6; }
`;

const Work = styled.main`
  display: flex; flex: 1; min-height: 0; background: #4e4c4c;
`;

/* ---------- docked panels ---------- */

const Dock = styled.aside<{ $w: number }>`
  position: relative; display: flex; flex-direction: column; width: ${(p) => p.$w}px; flex: none;
`;
const DockHead = styled.header`
  display: flex; align-items: center; gap: 6px; height: 23px; padding: 0 5px 0 0; color: #d8d8d8; flex: none;
  background: linear-gradient(#514f4f, #656363); border: solid #eee; border-width: 1px 1px 0 0;
  h2 { flex: 1; margin: 0; font-size: 11px; font-weight: 400; line-height: 20px; }
  button { display: grid; place-items: center; width: 10px; height: 16px; }
`;
const RightHead = styled(DockHead)`
  padding-left: 3px; border-width: 1px 1px 0 1px;
`;
const DockTabs = styled.div<{ $inset?: boolean }>`
  display: flex; height: 23px; padding: 3px 0 0 ${(p) => (p.$inset ? 3 : 0)}px; flex: none; background: linear-gradient(#3b3939, #605e5e);
`;
const DockTab = styled.button<{ $on?: boolean }>`
  padding: 0 6px 2px 7px; line-height: 18px; color: #f0f0f0;
  ${(p) => p.$on && css`background: #f2f2f2; color: #111; border: solid #111; border-width: 1px 1px 0 0; line-height: 16px; padding: 0 5px 2px 4px;`}
`;
const FootTabs = styled.div`
  display: flex; height: 24px; padding-bottom: 3px; border-top: 1px solid #bbb; background: linear-gradient(#5f5d5d, #424040); flex: none;
  button { padding: 0 8px; line-height: 18px; color: #eee; }
  button:first-child { padding: 0 5px 0 4px; background: #f2f2f2; color: #111; border-right: 1px solid #111; border-bottom: 1px solid #111; }
`;

const Form = styled.form`
  display: flex; flex-direction: column; flex: 1; min-height: 0; padding: 14px 0 0 3px; background: #efefef;
  border-right: 1px solid #aaa; font-family: ${FORM}; font-size: 12px; line-height: 16px;
`;
const TopRow = styled.div`
  display: flex; align-items: center; width: 208px; height: 21px; margin-bottom: 11px;
  label { width: 82px; }
  & > button { margin-left: auto; }
`;
const PickBox = styled.div`
  position: relative; width: 177px;
  select { width: 100%; height: 20px; padding-left: 3px; line-height: 16px; appearance: none; background: #e1e1e1; border: 1px solid #adadad; }
  svg { position: absolute; right: 4px; top: 7px; pointer-events: none; }
`;
const Dots = styled.button<{ $low?: boolean }>`
  width: 24px; height: ${(p) => (p.$low ? 16 : 21)}px; background: #e1e1e1; border: 1px solid #adadad; line-height: 12px; font-family: "Liberation Sans", sans-serif;
  &:disabled { background: #ccc; color: #777; }
`;
const Field = styled.input<{ $w: number }>`
  width: ${(p) => p.$w}px; height: 20px; padding: 0 2px 2px; font-size: 10px; background: #fff; border: 1px solid #7a7a7a; flex: none;
  &:read-only { background: #f0f0f0; }
  &:disabled { background: #f0f0f0; color: #777; border: 2px solid #ccc; }
`;
const PointField = styled(Field)`
  padding-left: 1px; background: #c3dcc3; border-width: 2px;
`;
const FocusField = styled(Field)`
  border-color: #111;
`;
const Box = styled.fieldset`
  width: 200px; min-width: 0; margin: 0 0 10px 5px; padding: 0 5px 2px 5px; border: 1px solid #dcdcdc;
  legend { padding: 0 3px; line-height: 14px; }
`;
const Line = styled.div<{ $h?: number; $top?: number; $in?: number }>`
  display: flex; align-items: center; height: ${(p) => p.$h ?? 20}px; margin-top: ${(p) => p.$top ?? 0}px; padding-left: ${(p) => p.$in ?? 0}px;
  & > button { margin-left: auto; }
`;
const Caption = styled.label<{ $w: number; $dim?: boolean }>`
  width: ${(p) => p.$w}px; white-space: nowrap; flex: none; color: ${(p) => (p.$dim ? "#999" : "#111")};
`;
const Unit = styled.span<{ $dim?: boolean }>`
  margin-left: 2px; padding-top: 3px; font-size: 10px; color: ${(p) => (p.$dim ? "#888" : "#111")};
`;
const Choice = styled.label<{ $w?: number }>`
  display: flex; align-items: center; gap: 3px; width: ${(p) => (p.$w ? `${p.$w}px` : "auto")}; flex: none;
  &:has(input:disabled) { color: #838383; }
  input { appearance: none; display: grid; place-items: center; width: 13px; height: 13px; background: #fff; border: 1px solid #333; flex: none; }
  input[type="radio"] { border-radius: 50%; }
  input[type="radio"]:checked::after { content: ""; width: 7px; height: 7px; border-radius: 50%; background: #222; }
  input[type="checkbox"]:checked::after { content: ""; width: 8px; height: 5px; border: solid #aaa; border-width: 0 0 2px 2px; transform: rotate(-45deg) translate(1px, -1px); }
  input:disabled { border-color: #ccc; }
`;
const SpinBox = styled.span<{ $dim?: boolean }>`
  display: flex; width: 49px; height: 20px; padding: 1px; flex: none; background: ${(p) => (p.$dim ? "#f0f0f0" : "#fff")}; border: 1px solid ${(p) => (p.$dim ? "#aaa" : "#7a7a7a")};
  input { flex: 1; min-width: 0; padding: 0 1px 2px; font-size: 10px; color: ${(p) => (p.$dim ? "#777" : "#111")}; }
  span { display: grid; grid-template-rows: 1fr 1fr; width: 16px; }
  button { display: grid; place-items: center; border: 1px solid #b5b5b5; background: #efefef; }
  button:first-child svg { transform: rotate(180deg); }
`;
const Actions = styled.div`
  display: flex; gap: 7px; padding-left: 85px;
  button { width: 56px; height: 23px; background: #e1e1e1; border: 1px solid #adadad; }
  button:first-child { border: 2px solid #2b83d0; background: #e2ebf3; }
`;
const Halo = styled.span`
  position: absolute; left: 123px; top: 126px; width: 59px; height: 59px; border-radius: 50%; background: #ffff00; mix-blend-mode: multiply; pointer-events: none;
`;

/* ---------- centre ---------- */

const Centre = styled.div`
  display: flex; flex-direction: column; gap: 4px; flex: 1; min-width: 0; margin: 0 4px; padding-bottom: 2px;
`;
const ViewFrame = styled.section`
  display: flex; flex-direction: column; flex: 1; min-height: 0; background: #fff;
`;
const ViewTabs = styled.div`
  display: flex; align-items: center; height: 25px; padding: 0 11px 2px 5px; background: #d0d0d0; border-bottom: 1px solid #fff; flex: none;
  & > button:last-child { margin-left: auto; }
`;
const ViewTab = styled.div`
  position: relative; display: flex; align-items: center; align-self: flex-start; gap: 11px; width: 128px; height: 22px; margin: 2px 0 0 24px; padding: 0 6px 2px 8px;
  background: #fff; border: solid #888; border-width: 1px 1px 0 0; border-radius: 4px 4px 0 0; font-size: 12px; line-height: 16px; font-weight: 700;
  &::before { content: ""; position: absolute; left: -6px; top: -1px; width: 14px; height: 22px; background: #fff; border: solid #888; border-width: 1px 0 0 1px; border-radius: 4px 0 0 0; transform: skewX(-25deg); }
  svg, span { position: relative; }
  button { margin-left: auto; }
`;
const Canvas = styled.div`
  position: relative; flex: 1; min-height: 0; margin: 1px 5px 4px 4px; border: solid #777; border-width: 1px 1px 0 1px; background: #fff;
  & > svg { width: 100%; height: 100%; }
`;
const Compass = styled.div`
  position: absolute; right: 9px; top: 11px;
`;

const InfoPanel = styled.section`
  display: flex; flex-direction: column; height: 135px; background: #f0f0f0; flex: none;
`;
const Output = styled.div`
  display: flex; height: 72px; margin: 2px 6px 0 3px; border: solid #777; border-width: 2px 0 0 1px; background: #fffef2; flex: none;
  textarea { flex: 1; resize: none; }
  div { display: flex; flex-direction: column; justify-content: space-between; align-items: center; width: 12px; padding: 7px 0; background: #f0f0f0; }
  div svg:first-child { transform: rotate(180deg); }
`;
const Prompt = styled.label`
  display: flex; height: 19px; margin: 1px 6px 0 3px; padding-left: 2px; border: solid #777; border-width: 1px 0 0 1px; background: #fffef2; line-height: 18px;
  font-family: ${FORM}; font-size: 10px; flex: none;
  input { flex: 1; }
`;
const InfoFoot = styled.div`
  display: flex; flex: 1; padding: 0 2px; min-height: 0;
`;
const NavButton = styled.button`
  display: grid; place-items: center; width: 18px; border: 1px solid #999; border-width: 0 1px 1px 0; background: #ececec;
`;
const InfoTab = styled.button<{ $on?: boolean }>`
  position: relative; width: ${(p) => (p.$on ? 68 : 66)}px; padding-top: 3px; font-size: 12px; line-height: 14px; font-family: ${FORM};
  font-weight: ${(p) => (p.$on ? 700 : 400)}; color: #111;
  &::before { content: ""; position: absolute; inset: 0 3px; background: ${(p) => (p.$on ? "#fff" : "#f0f0f0")}; border: 1px solid #111; border-top-width: ${(p) => (p.$on ? 0 : 1)}px; transform: perspective(20px) rotateX(-12deg); }
  span { position: relative; }
`;
const FootFill = styled.div`
  flex: 1; border: solid #111; border-width: 1px 1px 0 0; margin-right: 2px;
`;
const ScrollX = styled.div`
  display: flex; align-items: center; width: 33%; padding: 0 3px; border-left: 1px solid #111;
  span { width: 17px; height: 15px; margin-left: 4px; background: #cdcdcd; }
  svg { transform: rotate(90deg); }
  svg:last-child { margin-left: auto; transform: rotate(-90deg); }
`;

/* ---------- right side ---------- */

const Tree = styled.ul`
  flex: 1; min-height: 0; margin: 0; padding: 3px 0 0 3px; list-style: none; background: #ece9e4; border: solid #999; border-width: 0 2px 0 1px;
  font-family: ${FORM}; font-size: 12px; line-height: 16px;
`;
const TreeRow = styled.li<{ $root?: boolean }>`
  display: flex; align-items: center; height: 16px; padding-left: ${(p) => (p.$root ? 0 : 3)}px;
  & > span { margin-left: 5px; white-space: nowrap; }
`;
const Expander = styled.button`
  position: relative; width: 9px; height: 9px; margin-right: 7px; border: 1px solid #888; background: #fff; flex: none;
  &::before { content: ""; position: absolute; left: 1px; top: 3px; width: 5px; height: 1px; background: #223c8c; }
  &::after { content: ""; position: absolute; left: 3px; top: 1px; width: 1px; height: 5px; background: #223c8c; }
`;
const Dotted = styled.i`
  width: 6px; margin-left: -6px; border-top: 1px dotted #888;
`;

const Speed = styled.div`
  position: absolute; right: 11px; bottom: 22px; display: flex; align-items: center; height: 38px; width: 127px; padding: 0 5px 0 52px;
  border: 1px solid #b5b5b5; border-radius: 19px; background: linear-gradient(#f8f8f8, #e4e4e4); box-shadow: 0 3px 6px rgba(0, 0, 0, 0.35);
  dl { display: grid; grid-template-columns: 14px auto; margin: 0; line-height: 15px; font-size: 9px; align-items: center; }
  dt, dd { margin: 0; white-space: nowrap; }
  button { margin-left: auto; }
`;
const Gauge = styled.strong`
  position: absolute; left: -2px; top: -6px; display: grid; place-items: center; width: 49px; height: 49px; border-radius: 50%; border: 2px solid #f2f2f2;
  box-shadow: 0 0 0 1px #999, inset 0 0 2px 1px #0a5a32; font-size: 14px; font-weight: 400; color: #eafff0;
  background: radial-gradient(ellipse 14px 6px at 50% 14%, rgba(255, 255, 255, 0.6), transparent), linear-gradient(#087a4c 46%, #45c75c 46%);
`;

const SideColumn = styled.div`
  width: 14px; flex: none; background: #5a5858; overflow: hidden;
`;
const SideTools = styled.div`
  display: flex; flex-direction: column; align-items: flex-start; width: 30px; padding: 0 0 2px 4px; background: #d6d6d6; border-radius: 0 0 0 3px;
`;
const SideGrip = styled.span`
  width: 20px; height: 12px; background: repeating-linear-gradient(90deg, #333 0 2px, transparent 2px 4px) 1px 5px / 100% 2px no-repeat;
`;
const SideButton = styled.button<{ $down?: boolean }>`
  display: grid; place-items: center; width: 20px; height: 22px;
  ${(p) => p.$down && css`background: #8f9092; border: 1px solid #555;`}
`;
const SideRule = styled.span`
  width: 20px; height: 6px; background: linear-gradient(#fff, #fff) 0 3px / 100% 1px no-repeat;
`;

/* ---------- status bar ---------- */

const Status = styled.footer`
  display: flex; height: 18px; background: #272727; color: #e2e2e2; line-height: 16px; flex: none; white-space: nowrap; overflow: hidden;
`;
const StatusCell = styled.span<{ $w?: number }>`
  ${(p) => (p.$w ? `width: ${p.$w}px;` : "flex: 1;")} padding: 3px 3px 0 2px; border-right: 1px solid #777;
  &:nth-child(2) { padding-left: 9px; }
`;
const StatusTools = styled.div`
  display: flex; gap: 5px; width: 360px; padding: 1px 0 0 2px; overflow: hidden; background: #f0f0f0; color: #111; font-family: ${FORM}; font-size: 10px; flex: none;
`;
const StatusPick = styled.span<{ $w: number }>`
  position: relative; width: ${(p) => p.$w}px; flex: none;
  select { width: 100%; height: 17px; padding: 0 16px 0 3px; appearance: none; background: #e6e6e6; border: 1px solid #bbb; text-overflow: clip; overflow: hidden; }
  svg { position: absolute; right: 5px; top: 6px; pointer-events: none; }
`;
const StatusButton = styled.button<{ $bg?: string }>`
  display: grid; place-items: center; width: 18px; height: 17px; border: 2px solid #86dede; background: ${(p) => p.$bg ?? "#c4c4c4"}; flex: none; font-size: 12px; font-weight: 700;
`;
const StatusField = styled.input<{ $w: number }>`
  width: ${(p) => p.$w}px; height: 17px; text-align: center; background: #fff; flex: none;
  &:disabled { background: #f0f0f0; color: #888; }
`;
const Stepper = styled.span`
  display: grid; width: 12px; place-items: center; flex: none;
  button { height: 8px; display: grid; place-items: center; }
  button:first-child svg { transform: rotate(180deg); }
`;

/* ---------- data ---------- */

const outer = [[579,729],[582,683],[590,636],[605,591],[624,548],[649,507],[678,470],[721,428],[767,392],[816,362],[867,339],[920,324],[970,316],[1023,316],[1074,323],[1123,338],[1169,361],[1212,391],[1241,419],[1265,452],[1285,489],[1300,530],[1308,574],[1311,620]];
const inner = [[606,748],[609,707],[617,666],[630,626],[648,588],[670,552],[696,520],[736,482],[778,449],[824,422],[871,401],[920,387],[970,379],[1019,379],[1066,386],[1111,399],[1154,419],[1194,445],[1220,470],[1242,499],[1260,532],[1273,568],[1281,606],[1284,646]];

const seg = (a: number[], b: number[]) => `M${a[0]} ${a[1]}L${b[0]} ${b[1]}`;
const chord = (pts: number[][]) => "M" + pts.map((p) => p.join(" ")).join("L");
const posts = outer.map((p, i) => seg(p, inner[i])).join("");
const braces = outer
  .map((p, i) => (i < 11 ? seg(p, inner[i + 1]) : i > 12 ? seg(inner[i - 1], p) : ""))
  .join("");

const treeRows: [string, string][] = [
  ["edit", "环境设置"], ["model", "模型"], ["load", "静力荷载"], ["spec", "反应谱分析数据"], ["time", "时程分析数据"],
  ["crane", "吊车荷载分析数据"], ["comp", "组合截面分析数据"], ["edit", "水化热分析数据"], ["edit", "非线性分析数据"],
  ["flaw", "初始缺陷"], ["stage", "施工阶段分析数据"], ["result", "结果"], ["design", "设计"], ["query", "查询"],
];

/* ---------- parts ---------- */

const Big = ({ icon, children, wide }: { icon: string; children: string; wide?: boolean }) => (
  <BigButton $wide={wide} type="button"><Glyph set={bigIcons} name={icon} size={30} box={32} />{children}</BigButton>
);
const Small = ({ icon, text, menu }: { icon: string; text?: string; menu?: boolean }) => (
  <SmallButton type="button" aria-label={text ?? icon}>
    <Glyph set={smallIcons} name={icon} size={16} box={16} />
    {text && <span>{text}</span>}
    {menu && <Caret />}
  </SmallButton>
);
const Tools = ({ names, down }: { names: string[]; down?: string }) => (
  <>{names.map((n) => <ToolButton key={n} type="button" aria-label={n} $down={n === down}><Glyph set={barIcons} name={n} size={18} box={20} /></ToolButton>)}</>
);
const SideSet = ({ names, down = [] }: { names: string[]; down?: string[] }) => (
  <>{names.map((n, i) => <SideButton key={n + i} type="button" aria-label={n} $down={down.includes(n)}><Glyph set={barIcons} name={n} size={19} box={20} /></SideButton>)}</>
);
const Spin = ({ id, value, dim }: { id: string; value: string; dim?: boolean }) => (
  <SpinBox $dim={dim}>
    <input id={id} defaultValue={value} disabled={dim} />
    <span>
      <button type="button" aria-label="+" disabled={dim}><Caret c={dim ? "#888" : "#111"} /></button>
      <button type="button" aria-label="-" disabled={dim}><Caret c={dim ? "#888" : "#111"} /></button>
    </span>
  </SpinBox>
);

const AppMark = ({ size }: { size: number }) => (
  <svg width={size} height={size} viewBox="0 0 14 14" aria-hidden="true">
    <path d="M3 1h6v3H5L4 9h4V7h5v5H1L0 9z" fill="#b80f1c" /><path d="M8 1l2 4M11 1v4M13 1l-1 4" stroke="#c98a2a" strokeWidth="1.300" /><path d="M1 12h11v2H3z" fill="#7b0a12" />
  </svg>
);

const TitleArea = () => (
  <TitleBar>
    <Logo>
      <svg width="41" height="17" viewBox="0 0 41 17" aria-hidden="true">
        <path d="M4 0h8l-3 7 12 3 1-10h4l-1 14L6 12 2 4z" fill="#c0141c" /><path d="M4 11l20 3-2 2-14-1z" fill="#6b0a0e" />
        <path d="M24 0l1 8M27 1l1 6M30 0v6M33 0l-2 7" stroke="#e0a030" strokeWidth="2" /><path d="M24 9l9-3" stroke="#8a3a10" strokeWidth="2" />
      </svg>
    </Logo>
    {["视图", "结构", "节点/单元", "特性", "边界", "荷载", "分析", "结果", "Pushover", "设计", "查询", "工具"].map((t) => (
      <RibbonTab key={t} type="button" $on={t === "节点/单元"}>{t}</RibbonTab>
    ))}
    <WindowTools>
      <button type="button">
        <svg width="16" height="16" viewBox="0 0 16 16" aria-hidden="true"><circle cx="8" cy="8" r="7" fill="none" stroke="#bbb" strokeWidth="2" strokeDasharray="2 1" /><circle cx="8" cy="8" r="5.500" fill="#eee" /><path d="M8 5v6" stroke="#222" strokeWidth="2" /><circle cx="8" cy="6" r="2" fill="#222" /></svg>
        帮助
      </button>
      <Chevron c="#ddd" w={6} />
      <svg width="9" height="9" viewBox="0 0 9 9" aria-hidden="true"><path d="M0 7h9" stroke="#fff" strokeWidth="2" /></svg>
      <svg width="9" height="9" viewBox="0 0 9 9" aria-hidden="true"><path d="M3 3V1h5v5H6M1 4h5v4H1z" fill="none" stroke="#fff" strokeWidth="1.300" /></svg>
      <svg width="2" height="9" viewBox="0 0 2 9" aria-hidden="true"><path d="M0 1l2 2M0 8l2-2" stroke="#fff" strokeWidth="1.500" /></svg>
    </WindowTools>
  </TitleBar>
);

const RibbonArea = () => (
  <Ribbon>
    <RibbonGroup>
      <GroupBody>
        <Big icon="node" wide>建立节点</Big>
        <RibbonRule />
        <Big icon="move" wide>移动复制</Big>
        <Big icon="cut">分割</Big>
        <Big icon="merge">合并</Big>
        <SmallColumn><Small icon="del" text="删除" /><Small icon="rot" text="旋转" /><Small icon="proj" text="投影" /></SmallColumn>
        <SmallColumn><Small icon="mirror" text="镜像" /><Small icon="scale" text="缩放" /></SmallColumn>
        <SmallColumn><Small icon="nMerge" /><Small icon="nAxis" /><Small icon="nRot" /></SmallColumn>
        <RibbonRule />
        <Big icon="nodeTable" wide>节点表格</Big>
      </GroupBody>
      <GroupName>节点</GroupName>
    </RibbonGroup>
    <RibbonGroup>
      <GroupBody>
        <Big icon="elem" wide>建立单元</Big>
        <SmallColumn><Small icon="curve" /><Small icon="swap" /><Small icon="arch" /></SmallColumn>
        <RibbonRule />
        <Big icon="moveElem" wide>移动复制</Big>
        <Big icon="extend">扩展</Big>
        <Big icon="cutElem">分割</Big>
        <Big icon="mergeElem">合并</Big>
        <Big icon="cross" wide>交叉分割</Big>
        <SmallColumn><Small icon="delE" text="删除" /><Small icon="rotE" text="旋转" /><Small icon="mirrorE" text="镜像" /></SmallColumn>
        <SmallColumn><Small icon="nMergeE" /><Small icon="nAxis" /><Small icon="nRotE" /></SmallColumn>
        <RibbonRule />
        <Big icon="param" wide>修改参数</Big>
        <RibbonRule />
        <Big icon="elemTable" wide>单元表格</Big>
      </GroupBody>
      <GroupName>单元</GroupName>
    </RibbonGroup>
    <RibbonGroup>
      <GroupBody>
        <SmallColumn><Small icon="beam" text="有效梁" menu /><Small icon="strip" text="柱上板带" menu /><Small icon="plate" text="托板" menu /></SmallColumn>
        <SmallColumn><Small icon="head" text="柱头连接" menu /></SmallColumn>
      </GroupBody>
      <GroupName>平板结构</GroupName>
    </RibbonGroup>
    <RibbonGroup>
      <GroupBody>
        <SmallColumn><Small icon="mesh" text="自动网格" /><Small icon="mapMesh" text="映射网格" /><Small icon="region" text="定义区域" /></SmallColumn>
        <SmallColumn><Small icon="region" text="定义子区域" /></SmallColumn>
      </GroupBody>
      <GroupName>网格</GroupName>
    </RibbonGroup>
  </Ribbon>
);

const StripArea = () => (
  <ToolStrip>
    <ToolPanel>
      <Grip $first />
      <Tools names={["undo"]} /><CaretButton type="button" aria-label="undo list"><Caret /></CaretButton>
      <Tools names={["redo"]} /><CaretButton type="button" aria-label="redo list"><Caret c="#999" /></CaretButton>
    </ToolPanel>
    <ToolPanel>
      <Grip />
      <Tools names={["group", "tree"]} /><ToolRule />
      <Tools names={["selNode", "win", "poly", "line", "plane", "vol", "circ"]} /><ToolRule />
      <Tools names={["prev", "recent"]} /><ToolRule />
      <Tools names={["unwin", "unpoly", "unline", "uncirc"]} /><ToolRule />
      <Tools names={["pickN"]} />
      <Combo><input aria-label="nodes" defaultValue="1to48" /><button type="button" aria-label="node list"><Caret /></button></Combo>
      <Tools names={["pickE"]} />
      <Combo><input aria-label="elements" defaultValue="1to92" /><button type="button" aria-label="element list"><Caret /></button></Combo>
    </ToolPanel>
    <ToolPanel>
      <Grip />
      <Tools names={["act1", "act2", "act3", "act4", "act5"]} /><ToolRule />
      <Tools names={["act6"]} />
    </ToolPanel>
    <ToolPanel>
      <Grip />
      <Tools names={["fit", "persp", "cube", "globe", "screen", "screen2"]} down="cube" /><ToolRule />
      <Tools names={["nN", "nE", "nP"]} />
    </ToolPanel>
    <ToolPanel>
      <Grip />
      <Tools names={["chart", "lockD", "lockG"]} down="lockD" />
    </ToolPanel>
  </ToolStrip>
);

const LeftDock = () => (
  <Dock $w={255}>
    <DockHead>
      <h2>树形菜单</h2>
      <button type="button" aria-label="pin"><Pin /></button>
      <button type="button" aria-label="close"><Cross /></button>
    </DockHead>
    <DockTabs>
      {["节点", "单元", "边界条件", "质量", "荷载"].map((t, i) => <DockTab key={t} type="button" $on={i === 0}>{t}</DockTab>)}
    </DockTabs>
    <Form onSubmit={(e) => e.preventDefault()}>
      <TopRow>
        <PickBox><select aria-label="命令"><option>旋转节点</option></select><Chevron /></PickBox>
        <Dots type="button">...</Dots>
      </TopRow>
      <TopRow>
        <label htmlFor="start">节点起始号:</label>
        <Field id="start" $w={47} defaultValue="49" readOnly />
        <Dots type="button">...</Dots>
      </TopRow>
      <Box>
        <legend>形式</legend>
        <Line $h={18} $in={19}>
          <Choice $w={91}><input type="radio" name="mode" />复制</Choice>
          <Choice><input type="radio" name="mode" defaultChecked />移动</Choice>
        </Line>
      </Box>
      <Box>
        <legend>旋转</legend>
        <Line $top={3} $in={8}>
          <Choice $w={81}><input type="radio" name="angle" defaultChecked />等角度</Choice>
          <Choice><input type="radio" name="angle" disabled />任意角度</Choice>
        </Line>
        <Line $top={4}><Caption $w={108} htmlFor="count">复制次数:</Caption><Spin id="count" value="1" dim /></Line>
        <Line $top={3}><Caption $w={108} htmlFor="deg">旋转角度:</Caption><Spin id="deg" value="0" /><Unit>[deg]</Unit></Line>
        <Line $top={6}><Caption $w={108} htmlFor="radial">间距(径向):</Caption><FocusField id="radial" $w={49} defaultValue="0" /><Unit>mm</Unit></Line>
        <Line $top={2}><Caption $w={108} htmlFor="axial">间距(旋转轴向):</Caption><Field id="axial" $w={49} defaultValue="0" /><Unit>mm</Unit></Line>
        <Line $top={6}><span>旋转轴:</span></Line>
        <Line $top={2} $h={19}><Choice><input type="radio" name="axis" />绕 x 轴</Choice></Line>
        <Line $h={19}><Choice><input type="radio" name="axis" />绕 y 轴</Choice></Line>
        <Line $h={20}><Choice><input type="radio" name="axis" defaultChecked />绕 z 轴</Choice></Line>
        <Line $h={19}><Choice><input type="radio" name="axis" />绕两点定义的轴</Choice></Line>
        <Line $top={6} $in={19}><Caption $w={56} htmlFor="p1">第一点:</Caption><PointField id="p1" $w={88} defaultValue="1300674, 0, -390002.4" /><Unit>mm</Unit></Line>
        <Line $top={4} $in={19}><Caption $w={56} $dim htmlFor="p2">第二点:</Caption><Field id="p2" $w={88} defaultValue="0, 0, 0" disabled /><Unit $dim>mm</Unit></Line>
        <Line $top={10}><Choice><input type="checkbox" defaultChecked disabled />合并重复节点</Choice><Dots type="button" $low disabled>...</Dots></Line>
        <Line><Choice><input type="checkbox" disabled />复制节点属性</Choice><Dots type="button" $low disabled>...</Dots></Line>
        <Line><Choice><input type="checkbox" />在交叉点分割单元</Choice><Dots type="button" $low>...</Dots></Line>
      </Box>
      <Actions><button type="button">适用</button><button type="button">关闭</button></Actions>
    </Form>
    <FootTabs><button type="button">树形菜单</button><button type="button">工作面板</button></FootTabs>
    <Halo />
  </Dock>
);

const CompassArt = () => (
  <svg width="72" height="72" viewBox="0 0 72 72" aria-hidden="true">
    <g fill="#fafafe" stroke="#d2d2d6" strokeWidth="1.300">
      <path d="M25 1h21v21H25zM25 25h21v21H25zM1 25h21v21H1zM49 25h21v21H49zM25 49h21v21H25z" />
      <path fill="none" d="M4 6l3-3 8 8V4h4v14H5v-4h7zM67 6l-3-3-8 8V4h-4v14h14v-4h-7zM4 65l3 3 8-8v7h4V53H5v4h7zM67 65l-3 3-8-8v7h-4V53h14v4h-7z" />
    </g>
    <path d="M25 1h21M1 25v21M70 25v21M25 70h21" stroke="#c4e3f6" strokeWidth="3" />
    <text x="35.500" y="39" textAnchor="middle" fontFamily="Liberation Sans" fontSize="9" fill="#c0c0c8">TOP</text>
  </svg>
);

const CentreArea = () => (
  <Centre>
    <ViewFrame>
      <ViewTabs>
        <button type="button" aria-label="previous"><svg width="6" height="9" viewBox="0 0 6 9" aria-hidden="true"><path d="M5 1v7L1 4.500z" fill="none" stroke="#555" /></svg></button>
        <ViewTab><AppMark size={14} /><span>MIDAS/Gen</span><button type="button" aria-label="close view"><Cross c="#444" /></button></ViewTab>
        <button type="button" aria-label="next"><svg width="6" height="9" viewBox="0 0 6 9" aria-hidden="true"><path d="M1 1v7l4-3.500z" fill="none" stroke="#555" /></svg></button>
      </ViewTabs>
      <Canvas>
        <svg viewBox="263 181 1356 663" role="img" aria-label="truss arch">
          <path d={chord(outer) + chord(inner) + posts + braces} fill="none" stroke="#cf1519" strokeWidth="2" />
          {[...outer, ...inner].map(([x, y]) => <circle key={`${x}-${y}`} cx={x} cy={y} r="2.800" fill="#6e0a78" />)}
          <g fill="none" stroke="#1c1ca8" strokeWidth="1.200">
            <path d="M274 825l5-3 10 1-3 5zM281 830l9-5 12 6M290 824l12 14 51-5M302 832l29-3 22-2-5 6-18-5M302 838l-22-9M312 836l-8-6M318 831l-6 6M340 827l-8 6" />
          </g>
        </svg>
        <Compass><CompassArt /></Compass>
      </Canvas>
    </ViewFrame>
    <InfoPanel>
      <RightHead><h2>信息窗口</h2><button type="button" aria-label="pin"><Pin /></button><button type="button" aria-label="close"><Cross /></button></RightHead>
      <Output><textarea aria-label="信息" readOnly /><div><Chevron c="#b5b5b5" /><Chevron c="#b5b5b5" /></div></Output>
      <Prompt>&gt;&gt;<input aria-label="command" /></Prompt>
      <InfoFoot>
        {["M8 1v8L4 5zM2 1v8", "M7 1v8L3 5z", "M3 1v8l4-4z", "M2 1v8l4-4zM8 1v8"].map((d) => (
          <NavButton key={d} type="button" aria-label="scroll tabs"><svg width="10" height="10" viewBox="0 0 10 10" aria-hidden="true"><path d={d} fill="#999" stroke="#999" /></svg></NavButton>
        ))}
        <InfoTab type="button" $on><span>命令信息</span></InfoTab>
        <InfoTab type="button"><span>分析信息</span></InfoTab>
        <FootFill />
        <ScrollX><Chevron c="#333" /><span /><Chevron c="#333" /></ScrollX>
      </InfoFoot>
    </InfoPanel>
  </Centre>
);

const RightDock = () => (
  <Dock $w={261}>
    <RightHead><h2>树形菜单 2</h2><button type="button" aria-label="pin"><Pin /></button><button type="button" aria-label="close"><Cross /></button></RightHead>
    <DockTabs $inset>
      {["菜单", "表格", "组", "工作", "计算书"].map((t, i) => <DockTab key={t} type="button" $on={i === 0}>{t}</DockTab>)}
    </DockTabs>
    <Tree>
      <TreeRow $root><Glyph set={treeIcons} name="root" size={16} box={16} /><span>结构分析</span></TreeRow>
      {treeRows.map(([icon, text]) => (
        <TreeRow key={text}><Expander type="button" aria-label={`展开 ${text}`} /><Dotted /><Glyph set={treeIcons} name={icon} size={16} box={16} /><span>{text}</span></TreeRow>
      ))}
    </Tree>
    <Speed>
      <Gauge>55%</Gauge>
      <dl>
        <dt><svg width="8" height="8" viewBox="0 0 8 8" aria-hidden="true"><path d="M4 8V2M1 4l3-3 3 3" fill="none" stroke="#e05040" strokeWidth="1.600" /></svg></dt><dd>0.07K/s</dd>
        <dt><svg width="8" height="8" viewBox="0 0 8 8" aria-hidden="true"><path d="M4 0v6M1 4l3 3 3-3" fill="none" stroke="#1c9a50" strokeWidth="1.600" /></svg></dt><dd>0.07K/s</dd>
      </dl>
      <button type="button" aria-label="boost"><svg width="19" height="19" viewBox="0 0 19 19" aria-hidden="true"><circle cx="8.500" cy="10" r="8" fill="#2f74cc" /><path d="M8.500 6v8M4.500 10h8" stroke="#fff" strokeWidth="2" /><circle cx="15" cy="4" r="3.500" fill="#d83434" /></svg></button>
    </Speed>
  </Dock>
);

const SideArea = () => (
  <SideColumn>
    <SideTools>
      <SideGrip /><SideSet names={["squares", "gridL"]} />
      <SideGrip /><SideSet names={["sqChk", "gridChk", "snapL", "snapM", "snapP", "snapX"]} down={["snapL", "snapM"]} />
      <SideGrip /><SideSet names={["zoomW", "zoomD", "zoomI", "zoomO", "zoomW"]} />
      <SideGrip /><SideSet names={["mag", "hand", "rotate"]} />
      <SideGrip /><SideSet names={["winR", "winS"]} />
      <SideRule /><SideSet names={["cubeA", "cubeB", "cubeC", "cubeD", "axes"]} />
      <SideRule /><SideSet names={["winP", "winC"]} />
    </SideTools>
  </SideColumn>
);

const StatusArea = () => (
  <Status>
    <StatusCell>如想查找帮助, 请按F1键</StatusCell>
    <StatusCell $w={84}>无-6</StatusCell>
    <StatusCell $w={171}>U: 1300674, 0, -390002.4</StatusCell>
    <StatusCell $w={172}>G: 1300674, 0, -390002.4</StatusCell>
    <StatusTools>
      <StatusPick $w={48}><select aria-label="力单位"><option>tonf</option></select><Chevron /></StatusPick>
      <StatusPick $w={50}><select aria-label="长度单位"><option>mm</option></select><Chevron /></StatusPick>
      <StatusButton type="button" aria-label="snap"><svg width="14" height="13" viewBox="0 0 14 13" aria-hidden="true"><path d="M4 4h6v5H4zM7 0v4M7 9v4M0 6.500h4M10 6.500h4" fill="none" stroke="#555" strokeWidth="1.500" /></svg></StatusButton>
      <StatusButton type="button" aria-label="align"><svg width="14" height="13" viewBox="0 0 14 13" aria-hidden="true"><path d="M7 0v13M0 4h5M2 8h3M9 3h5M9 7h3M9 10h5" fill="none" stroke="#555" strokeWidth="1.500" /></svg></StatusButton>
      <StatusButton type="button" aria-label="play"><svg width="8" height="11" viewBox="0 0 8 11" aria-hidden="true"><path d="M1 0v11l7-5.500z" fill="#555" /></svg></StatusButton>
      <StatusPick $w={44}><select aria-label="过滤"><option>none</option></select><Chevron /></StatusPick>
      <StatusButton type="button" $bg="#e6ffff">?</StatusButton>
      <StatusButton type="button" $bg="#00ffff" aria-label="colour" />
      <StatusField $w={14} aria-label="current" defaultValue="0" disabled />
      <Stepper><button type="button" aria-label="+"><Caret /></button><button type="button" aria-label="-"><Caret /></button></Stepper>
      <span>/</span>
      <StatusField $w={30} aria-label="total" defaultValue="2" />
      <Stepper><button type="button" aria-label="+"><Caret /></button><button type="button" aria-label="-"><Caret /></button></Stepper>
    </StatusTools>
  </Status>
);

export default function App() {
  return (
    <Shell>
      <Global />
      <TitleArea />
      <RibbonArea />
      <StripArea />
      <Work>
        <LeftDock />
        <CentreArea />
        <RightDock />
        <SideArea />
      </Work>
      <StatusArea />
    </Shell>
  );
}
